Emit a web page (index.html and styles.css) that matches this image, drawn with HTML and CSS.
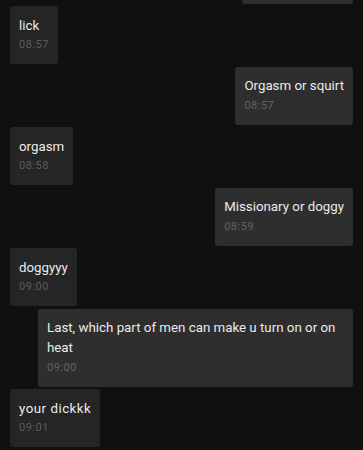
FILE: index.html
```html
<!DOCTYPE html>
<html>
<head>
<meta charset="utf-8">
<link rel="stylesheet" href="styles.css">
</head>
<body>
<div class="chat">
  <div class="msg out partial"><div class="text">&nbsp;</div><div class="time">&nbsp;</div></div>
  <div class="msg in"><div class="text">lick</div><div class="time">08:57</div></div>
  <div class="msg out"><div class="text">Orgasm or squirt</div><div class="time">08:57</div></div>
  <div class="msg in"><div class="text">orgasm</div><div class="time">08:58</div></div>
  <div class="msg out"><div class="text">Missionary or doggy</div><div class="time">08:59</div></div>
  <div class="msg in"><div class="text">doggyyy</div><div class="time">09:00</div></div>
  <div class="msg out"><div class="text">Last, which part of men can make u turn on or on heat</div><div class="time">09:00</div></div>
  <div class="msg in"><div class="text wide">your dickkk</div><div class="time">09:01</div></div>
</div>
</body>
</html>
```
FILE: styles.css
```css
html, body {
  margin: 0;
  padding: 0;
  background: #101010;
  height: 100%;
  overflow: hidden;
}
body {
  font-family: Roboto, "Noto Sans", sans-serif;
}
.chat {
  display: flex;
  flex-direction: column;
  gap: 2.5px;
  padding: 0 10px;
  margin-top: -54.5px;
}
.msg {
  max-width: 315px;
  box-sizing: border-box;
  padding: 9.5px 9px 12px 9px;
  border-radius: 3px;
}
.msg.in {
  align-self: flex-start;
  background: #252525;
}
.msg.out {
  align-self: flex-end;
  background: #2e2e2e;
}
.msg.partial {
  width: 111px;
}
.text {
  color: #ebebeb;
  font-size: 13.3px;
  line-height: 20px;
}
.text.wide {
  letter-spacing: 0.5px;
}
.time {
  color: #5c5c5c;
  font-size: 11px;
  line-height: 14px;
  margin-top: 2.5px;
  letter-spacing: 0.5px;
}
.out .time {
  color: #626262;
}
```
